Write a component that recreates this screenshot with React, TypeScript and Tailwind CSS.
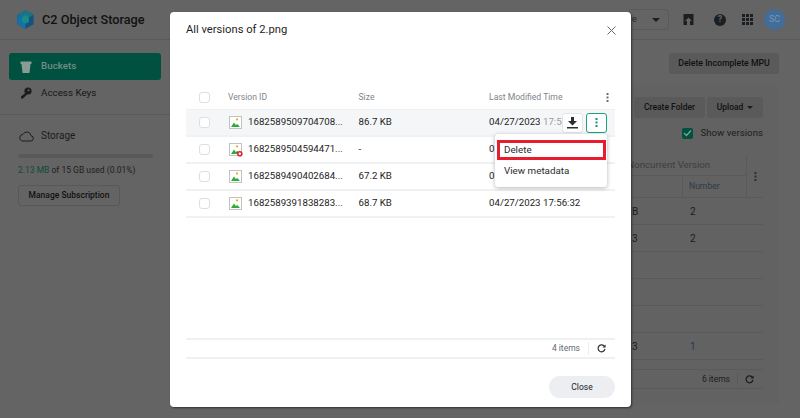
import React from "react";

const Logo = () => (
  <svg width="17" height="19" viewBox="0 0 20 22">
    <path d="M10 0 L19.5 5.5 V16.5 L10 22 L0.5 16.5 V5.5 Z" fill="#14527f" />
    <path d="M10 0 L19.5 5.5 L10 11 L0.5 5.5 Z" fill="#19748a" />
    <path d="M0.5 5.5 L10 11 V22 L0.5 16.5 Z" fill="#1272ab" />
    <path d="M6 8 L10 6 L14 8 V14 L10 16 L6 14 Z" fill="#1c8a86" />
  </svg>
);

const FileIcon = ({ deleted }: { deleted?: boolean }) => (
  <svg width="13" height="13" viewBox="0 0 13 13" className="shrink-0 overflow-visible">
    <rect x="0.5" y="0.5" width="12" height="12" fill="#fff" stroke="#c2c2c2" />
    <circle cx="8" cy="3.4" r="1.1" fill="#f0a81c" />
    <path d="M2 11 L5 6.5 L6.8 9 L8.3 8 L11 11 Z" fill="#2eab3a" />
    {deleted && <circle cx="10.8" cy="10.8" r="2" fill="#fff" stroke="#e0202c" strokeWidth="1.6" />}
  </svg>
);

const Dots = ({ className = "" }: { className?: string }) => (
  <svg width="3" height="9" viewBox="0 0 3 9" className={className} fill="currentColor">
    <rect x="0.5" y="0" width="2" height="2" />
    <rect x="0.5" y="3.5" width="2" height="2" />
    <rect x="0.5" y="7" width="2" height="2" />
  </svg>
);

const Refresh = ({ color = "#333" }: { color?: string }) => (
  <svg width="9" height="9" viewBox="0 0 12 12" fill="none">
    <path d="M10 3.4 A4.6 4.6 0 1 0 10.6 6.5" stroke={color} strokeWidth="1.6" />
    <path d="M11.5 0.5 V4.8 H7.2 Z" fill={color} />
  </svg>
);

const Check = () => <span className="block w-[11px] h-[11px] rounded-[3px] border border-[#dcdfe4] bg-white shrink-0" />;

const rows = [
  { id: "1682589509704708...", size: "86.7 KB", time: "04/27/2023", faded: "17:5", active: true },
  { id: "1682589504594471...", size: "-", time: "0", deleted: true },
  { id: "1682589490402684...", size: "67.2 KB", time: "0" },
  { id: "1682589391838283...", size: "68.7 KB", time: "04/27/2023 17:56:32" },
];

const bgRows: [string, string][] = [
  ["B", "2"],
  ["3", "2"],
  ["", ""],
  ["", ""],
  ["", ""],
  ["3", "1"],
];

export default function App() {
  return (
    <div className="relative w-[800px] h-[418px] overflow-hidden bg-[#646464] text-[#1d1d1d] font-['Roboto','Liberation_Sans',sans-serif]">
      {/* Page behind the overlay */}
      <div className="flex flex-col h-full">
        <header className="h-[40px] flex items-center border-b border-[#5a5a5a] shrink-0">
          <div className="flex items-center gap-[8px] pl-[17px]">
            <Logo />
            <span className="text-[12.7px] font-medium text-[#111]">C2 Object Storage</span>
          </div>
          <div className="ml-auto flex items-center pr-[15px]">
            <div className="w-[40px] h-[21px] mr-[14px] rounded-r-[4px] border border-[#5a5a5a] flex items-center justify-between pl-[2px] pr-[8px] text-[9px] text-[#2b2b2b]">
              <span>e</span>
              <span className="w-0 h-0 border-x-[4px] border-x-transparent border-t-[4px] border-t-[#1c1c1c]" />
            </div>
            <svg width="11" height="11" viewBox="0 0 11 11" className="mr-[20px]">
              <path d="M0.5 0 H10.5 V11 H7 V7 H9 L5.5 3.5 L2 7 H4 V11 H0.5 Z" fill="#1b1f24" />
            </svg>
            <span className="w-[12px] h-[12px] rounded-full bg-[#1b1f24] text-[#646464] text-[9px] font-bold flex items-center justify-center mr-[16px]">?</span>
            <div className="grid grid-cols-3 gap-[1px] w-[11px] mr-[11px]">
              {Array.from({ length: 9 }).map((_, i) => (
                <span key={i} className="w-[3px] h-[3px] bg-[#1b1f24]" />
              ))}
            </div>
            <span className="w-[21px] h-[21px] rounded-full bg-[#436d99] text-[#7396bb] text-[9px] flex items-center justify-center">SC</span>
          </div>
        </header>

        <div className="flex flex-1 min-h-0">
          <aside className="w-[170px] shrink-0 pt-[13px]">
            <nav className="px-[9px] pb-[8px] border-b border-[#5a5a5a]">
              <div className="h-[27px] rounded-[3px] bg-[#015140] flex items-center pl-[11px] gap-[9px] text-[#6f8f85] text-[9.8px] font-medium">
                <svg width="12" height="12" viewBox="0 0 12 12">
                  <path d="M0.5 0.5 H11.5 V3 H10.5 L9.5 12 H2.5 L1.5 3 H0.5 Z" fill="#8a9a94" />
                </svg>
                Buckets
              </div>
              <div className="h-[26px] flex items-center pl-[11px] gap-[9px] text-[9.8px] text-[#161616]">
                <svg width="12" height="12" viewBox="0 0 12 12">
                  <circle cx="8" cy="4" r="3.6" fill="#1c1c1c" />
                  <path d="M6 5.5 L7.5 7 L3 11.5 H1 V9.5 Z" fill="#1c1c1c" />
                  <circle cx="8.5" cy="3.2" r="1" fill="#646464" />
                </svg>
                Access Keys
              </div>
            </nav>
            <div className="pl-[18px] pr-[17px] pt-[13px]">
              <div className="flex items-center gap-[7px] text-[10px] text-[#1c1c1c]">
                <svg width="16" height="12" viewBox="0 0 16 12" fill="none">
                  <path d="M4 11 H12.5 A2.6 2.6 0 0 0 13 5.8 A4.2 4.2 0 0 0 5 4.4 A3.4 3.4 0 0 0 4 11 Z" stroke="#161616" strokeWidth="0.9" />
                </svg>
                Storage
              </div>
              <div className="mt-[11px] h-[4px] rounded-full bg-[#595959]" />
              <div className="mt-[6px] text-[8.5px] whitespace-nowrap text-[#1d1d1d]">
                <span className="text-[#0f4a3d]">2.13 MB</span> of 15 GB used (0.01%)
              </div>
              <div className="mt-[8px] w-[102px] h-[21px] rounded-[3px] border border-[#585858] flex items-center justify-center text-[8.5px] font-medium text-[#111]">
                Manage Subscription
              </div>
            </div>
          </aside>

          <main className="flex-1 min-w-0 pr-[21px]">
            <div className="flex justify-end pt-[13px]">
              <div className="w-[110px] h-[21px] rounded-[3px] bg-[#5a5a5a] flex items-center justify-center text-[8.7px] font-medium text-[#111]">
                Delete Incomplete MPU
              </div>
            </div>
            <section className="mt-[11px] h-[320px] rounded-[5px] bg-[#626262] pr-[16px] flex flex-col items-end">
              <div className="flex gap-[2px] pt-[12px]">
                <div className="w-[71px] h-[21px] rounded-[3px] bg-[#5a5a5a] flex items-center justify-center text-[8.5px] font-medium text-[#111]">Create Folder</div>
                <div className="w-[56px] h-[21px] rounded-[3px] bg-[#5a5a5a] flex items-center justify-center gap-[4px] text-[8.5px] font-medium text-[#111]">
                  Upload
                  <span className="w-0 h-0 border-x-[3px] border-x-transparent border-t-[3px] border-t-[#1c1c1c]" />
                </div>
              </div>
              <div className="flex items-center gap-[7px] mt-[9px] h-[12px] text-[9.7px] text-[#1c1c1c]">
                <span className="w-[11px] h-[11px] rounded-[2px] bg-[#015140] flex items-center justify-center">
                  <svg width="9" height="8" viewBox="0 0 9 8" fill="none">
                    <path d="M1 4 L3.5 6.5 L8 1.5" stroke="#8a9a94" strokeWidth="1.3" />
                  </svg>
                </span>
                Show versions
              </div>
              <div className="relative w-[131px] mt-[17px] text-[#3e3e3e] text-[9px]">
                <div className="flex h-[20px]">
                  <div className="w-[115px] flex items-center justify-end pr-[36px] text-[9.6px] whitespace-nowrap border-b border-r border-[#5a5a5a]">Noncurrent Version</div>
                </div>
                <div className="flex h-[22px] border-b border-[#5a5a5a]">
                  <div className="w-[51px] border-r border-[#5a5a5a]" />
                  <div className="w-[64px] flex items-center pl-[6px] border-r border-[#5a5a5a] text-[#2d3a44] text-[8.6px]">Number</div>
                </div>
                <Dots className="absolute right-[6px] top-[16px] text-[#2e2e2e]" />
                {bgRows.map(([a, b], i) => (
                  <div key={i} className="flex items-center h-[27px] border-b border-[#5a5a5a] text-[10px] text-[#1c1c1c]">
                    <span className="w-[51px]">{a}</span>
                    <span className={i === 5 ? "pl-[7px] text-[#1c3a57]" : "pl-[7px]"}>{b}</span>
                  </div>
                ))}
                <div className="h-[9px]" />
                <div className="flex items-center justify-end h-[20px] border-b border-t border-[#5a5a5a] text-[8.5px] gap-[7px] pr-[9px] text-[#1c1c1c]">
                  <span>6 items</span>
                  <span className="w-px h-[12px] bg-[#5a5a5a]" />
                  <Refresh color="#1c1c1c" />
                </div>
              </div>
            </section>
          </main>
        </div>
      </div>

      {/* Dialog */}
      <div className="absolute left-[170px] top-[12px] w-[461px] h-[395px] rounded-[4px] bg-white flex flex-col px-[16px] shadow-[1px_1px_2px_rgba(0,0,0,0.5)]">
        <div className="flex items-center justify-between h-[37px] shrink-0">
          <h2 className="text-[11.2px] text-[#1f1f1f]">All versions of 2.png</h2>
          <svg width="9" height="9" viewBox="0 0 9 9" className="mr-[-1px]">
            <path d="M0.5 0.5 L8.5 8.5 M8.5 0.5 L0.5 8.5" stroke="#666" strokeWidth="1" />
          </svg>
        </div>

        <div className="mt-[37px] flex-1 min-h-0 flex flex-col relative">
          <div className="flex items-center h-[24px] text-[8.6px] text-[#80848a] border-b border-[#eef0f2] shrink-0">
            <span className="ml-[13px]"><Check /></span>
            <span className="ml-[18px] w-[130.5px]">Version ID</span>
            <span className="w-[130.5px]">Size</span>
            <span className="w-[117px]">Last Modified Time</span>
            <Dots className="text-[#6d7176]" />
          </div>
          {rows.map((r, i) => (
            <div
              key={i}
              className={`flex items-center h-[27px] border-b-2 border-[#f0f1f3] text-[9.7px] text-[#242424] shrink-0 ${r.active ? "bg-[#f5f6f8]" : ""}`}
            >
              <span className="ml-[13px]"><Check /></span>
              <span className="ml-[19px] w-[129.5px] flex items-center gap-[6px] whitespace-nowrap overflow-hidden">
                <FileIcon deleted={r.deleted} />
                {r.id}
              </span>
              <span className="w-[130.5px]">{r.size}</span>
              <span className="whitespace-nowrap">
                {r.time}
                {r.faded && <span className="text-[#9a9ea3]"> {r.faded}</span>}
              </span>
              {r.active && (
                <span className="ml-auto mr-[8px] flex items-center gap-[3px]">
                  <span className="w-[21px] h-[20px] rounded-[3px] bg-white border border-[#e2e4e8] flex items-center justify-center">
                    <svg width="11" height="12" viewBox="0 0 11 12">
                      <path d="M4 0 H7 V4 H10 L5.5 8.5 L1 4 H4 Z M0 10 H11 V11.5 H0 Z" fill="#2b2f33" />
                    </svg>
                  </span>
                  <span className="w-[21px] h-[20px] rounded-[3px] bg-white border border-[#17a67f] flex items-center justify-center text-[#0e9a72]">
                    <Dots />
                  </span>
                </span>
              )}
            </div>
          ))}
          <div className="flex-1" />
          <div className="h-[21px] shrink-0 border-y-2 border-[#eef0f2] flex items-center justify-end text-[8.5px] text-[#666a6f] pr-[9px]">
            <span>4 items</span>
            <span className="w-px h-[13px] bg-[#eceef0] mx-[8px]" />
            <Refresh />
          </div>

          {/* Menu */}
          <div className="absolute right-[8px] top-[48px] w-[112px] h-[53px] rounded-[3px] bg-white shadow-[0_1px_4px_rgba(0,0,0,0.3)] text-[9.8px] text-[#2c2c2c] pl-[2px] pr-[1px] pt-[6px]">
            <div className="h-[20px] border-[3px] border-[#e81c2c] flex items-center pl-[4px]">Delete</div>
            <div className="h-[22px] flex items-center pl-[7px]">View metadata</div>
          </div>
        </div>

        <div className="h-[48px] shrink-0 flex items-start justify-end pt-[17px]">
          <div className="w-[66px] h-[22px] rounded-full bg-[#eceef2] flex items-center justify-center text-[8.5px] text-[#222]">Close</div>
        </div>
      </div>
    </div>
  );
}
